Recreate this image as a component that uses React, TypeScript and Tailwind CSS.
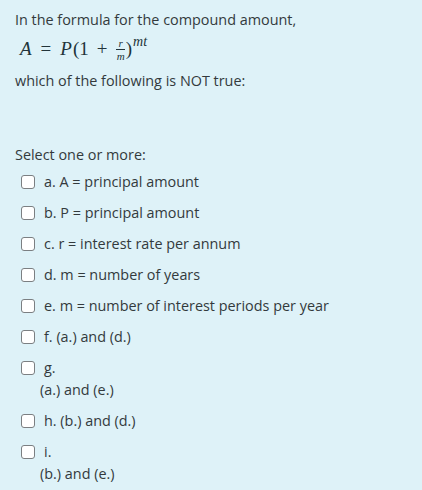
import React from 'react'

type Option = { letter: string; text: string; wrap?: boolean }

const OPTIONS: Option[] = [
  { letter: 'a.', text: 'A = principal amount' },
  { letter: 'b.', text: 'P = principal amount' },
  { letter: 'c.', text: 'r = interest rate per annum' },
  { letter: 'd.', text: 'm = number of years' },
  { letter: 'e.', text: 'm = number of interest periods per year' },
  { letter: 'f.', text: '(a.) and (d.)' },
  { letter: 'g.', text: '(a.) and (e.)', wrap: true },
  { letter: 'h.', text: '(b.) and (d.)' },
  { letter: 'i.', text: '(b.) and (e.)', wrap: true },
]

function Formula() {
  return (
    <div
      className="flex items-start pl-[5px] text-[19px] leading-[24px] text-[#22343a]"
      style={{ fontFamily: '"Liberation Serif", "DejaVu Serif", serif' }}
    >
      <span className="italic">A</span>
      <span className="mx-[9px]">=</span>
      <span className="italic">P</span>
      <span className="ml-[1px]">(1</span>
      <span className="mx-[8px]">+</span>
      <span className="mx-[1px] flex flex-col items-center text-[11px] leading-[12px] italic">
        <span className="border-b border-[#22343a] px-[2px]">r</span>
        <span>m</span>
      </span>
      <span>)</span>
      <span className="-mt-[3px] ml-[1px] text-[14px] leading-[16px] italic">mt</span>
    </div>
  )
}

export default function App() {
  return (
    <div
      className="min-h-[490px] bg-[#def2f8] px-[15px] pt-[9px] text-[14.4px] leading-[22px] text-[#333a3d]"
      style={{ fontFamily: '"Open Sans", "Noto Sans", sans-serif' }}
    >
      <p>In the formula for the compound amount,</p>
      <div className="mt-[6px]">
        <Formula />
      </div>
      <p className="mt-[8px]">which of the following is NOT true:</p>

      <p className="mt-[52px]">Select one or more:</p>
      <div className="flex flex-col">
        {OPTIONS.map((o) => (
          <div key={o.letter} className="flex items-start py-[4.5px] pl-[6px]">
            <span className="mt-[4px] size-[14px] shrink-0 rounded-[3px] border-[1.5px] border-[#7b7f82] bg-white" />
            <div className="ml-[9px]">
              {o.wrap ? (
                <>
                  <div>{o.letter}</div>
                  <div className="-ml-[4px]">{o.text}</div>
                </>
              ) : (
                <div>
                  {o.letter} {o.text}
                </div>
              )}
            </div>
          </div>
        ))}
      </div>
    </div>
  )
}
